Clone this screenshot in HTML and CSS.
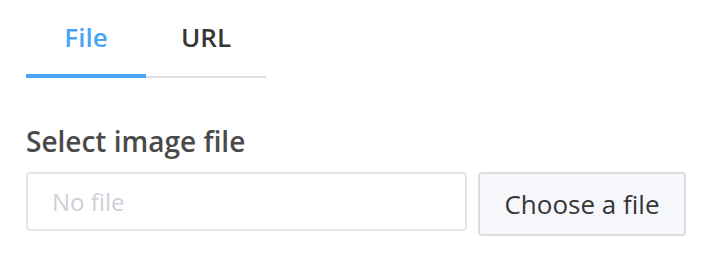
FILE: index.html
```html
<!DOCTYPE html>
<html>
<head>
<meta charset="utf-8">
<link rel="stylesheet" href="styles.css">
</head>
<body>
<div class="page">
  <div class="tabs">
    <a class="tab active">File</a>
    <a class="tab">URL</a>
  </div>
  <label class="label">Select image file</label>
  <div class="row">
    <div class="input">No file</div>
    <button class="btn">Choose a file</button>
  </div>
</div>
</body>
</html>
```

FILE: styles.css
```css
html, body {
  margin: 0;
  background: #ffffff;
}
.page {
  padding: 19px 0 0 26px;
  font-family: "Open Sans", "Liberation Sans", sans-serif;
}
.tabs {
  display: flex;
  width: 240px;
  border-bottom: 2px solid #dcdee3;
}
.tab {
  display: block;
  width: 120px;
  text-align: center;
  font-size: 26px;
  font-weight: 600;
  line-height: 36px;
  padding-bottom: 19px;
  margin-bottom: -2px;
  border-bottom: 4px solid transparent;
  color: #363636;
}
.tab.active {
  color: #4aa5f5;
  border-bottom-color: #4aa5f5;
}
.label {
  display: block;
  margin-top: 44px;
  font-size: 28px;
  font-weight: 600;
  line-height: 38px;
  color: #4a4a4a;
}
.row {
  display: flex;
  align-items: flex-start;
  gap: 11px;
  margin-top: 12px;
}
.input {
  box-sizing: border-box;
  width: 441px;
  height: 59px;
  border: 2px solid #e4e5ea;
  border-radius: 4px;
  padding-left: 24px;
  display: flex;
  align-items: center;
  font-size: 24px;
  color: #cdd0d8;
}
.btn {
  box-sizing: border-box;
  width: 208px;
  height: 64px;
  border: 2px solid #dcdde3;
  border-radius: 4px;
  background: #f6f7fb;
  font-family: "Open Sans", "Liberation Sans", sans-serif;
  font-size: 26px;
  color: #363636;
  padding: 0;
}
```
